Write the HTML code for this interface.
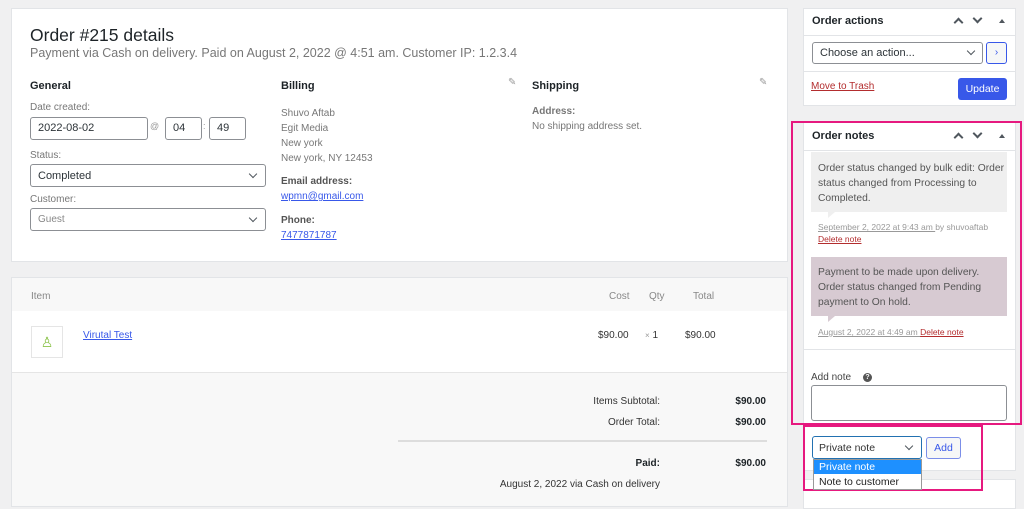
<!DOCTYPE html>
<html><head><meta charset="utf-8"><style>
*{box-sizing:border-box;margin:0;padding:0}
body{width:1024px;height:493px;overflow:hidden;background:#f0f0f1;font-family:"Liberation Sans",sans-serif;color:#50575e;position:relative;font-size:10px}
.a{position:absolute;white-space:nowrap}
.p{position:absolute;background:#fff;border:1px solid #e2e4e7}
.in{position:absolute;background:#fff;border:1px solid #8c8f94;border-radius:3px;font-size:11px;color:#2c3338;padding:4px 7px}
.b{font-weight:bold;color:#1d2327;font-size:11px}
.lk{color:#3858e9;text-decoration:underline}
.chev{position:absolute;width:6px;height:6px;border-right:1.5px solid #50575e;border-bottom:1.5px solid #50575e;transform:rotate(45deg)}
.up{position:absolute;width:7px;height:7px;border-left:2px solid #50575e;border-top:2px solid #50575e;transform:rotate(45deg)}
.dn{position:absolute;width:7px;height:7px;border-right:2px solid #50575e;border-bottom:2px solid #50575e;transform:rotate(45deg)}
.tri{position:absolute;width:0;height:0;border-left:3px solid transparent;border-right:3px solid transparent;border-bottom:4px solid #50575e}
</style></head><body>
<div class="p" style="left:11px;top:8px;width:777px;height:254px"></div>
<div class="a" style="left:30px;top:25px;font-size:17.5px;color:#1d2327">Order #215 details</div>
<div class="a" style="left:30px;top:46px;font-size:12.5px;color:#777">Payment via Cash on delivery. Paid on August 2, 2022 @ 4:51 am. Customer IP: 1.2.3.4</div>
<div class="a b" style="left:30px;top:80px">General</div>
<div class="a b" style="left:281px;top:80px">Billing</div>
<div class="a b" style="left:532px;top:80px">Shipping</div>
<div class="a" style="left:508px;top:77px;color:#999;font-size:10px">✎</div>
<div class="a" style="left:759px;top:77px;color:#999;font-size:10px">✎</div>
<div class="a" style="left:30px;top:102px;color:#777">Date created:</div>
<div class="in" style="left:30px;top:117px;width:118px;height:23px">2022-08-02</div>
<div class="a" style="left:150px;top:121px;color:#999;font-size:9px">@</div>
<div class="in" style="left:165px;top:117px;width:37px;height:23px">04</div>
<div class="a" style="left:203px;top:121px;color:#999;font-size:9px">:</div>
<div class="in" style="left:209px;top:117px;width:37px;height:23px">49</div>
<div class="a" style="left:30px;top:150px;color:#777">Status:</div>
<div class="in" style="left:30px;top:164px;width:236px;height:23px;padding-top:5px">Completed</div>
<div class="chev" style="left:250px;top:171px"></div>
<div class="a" style="left:30px;top:194px;color:#777">Customer:</div>
<div class="in" style="left:30px;top:208px;width:236px;height:23px;color:#888;padding-top:5px;font-size:10px">Guest</div>
<div class="chev" style="left:250px;top:215px"></div>
<div class="a" style="left:281px;top:106px;line-height:15px;color:#777">Shuvo Aftab<br>Egit Media<br>New york<br>New york, NY 12453</div>
<div class="a b" style="left:281px;top:176px;color:#555;font-size:10px">Email address:</div>
<div class="a lk" style="left:281px;top:191px">wpmn@gmail.com</div>
<div class="a b" style="left:281px;top:215px;color:#555;font-size:10px">Phone:</div>
<div class="a lk" style="left:281px;top:230px">7477871787</div>
<div class="a b" style="left:532px;top:106px;color:#777;font-size:10px">Address:</div>
<div class="a" style="left:532px;top:121px;color:#777">No shipping address set.</div>

<div class="p" style="left:11px;top:277px;width:777px;height:230px;background:#f8f8f8"></div>
<div class="a" style="left:31px;top:291px;color:#888">Item</div>
<div class="a" style="left:609px;top:291px;color:#888">Cost</div>
<div class="a" style="left:649px;top:291px;color:#888">Qty</div>
<div class="a" style="left:693px;top:291px;color:#888">Total</div>
<div class="a" style="left:12px;top:311px;width:775px;height:62px;background:#fff;border-bottom:1px solid #e5e5e5"></div>
<div class="a" style="left:31px;top:326px;width:32px;height:32px;border:1px solid #e5e5e5;background:#fff;color:#8bc34a;font-size:14px;text-align:center;line-height:30px">♙</div>
<div class="a lk" style="left:83px;top:330px">Virutal Test</div>
<div class="a" style="left:598px;top:330px;color:#333">$90.00</div>
<div class="a" style="left:645px;top:330px;color:#333"><span style="color:#999;font-size:8px">×</span> 1</div>
<div class="a" style="left:685px;top:330px;color:#333">$90.00</div>
<div class="a" style="right:364px;top:396px;color:#333">Items Subtotal:</div>
<div class="a b" style="right:258px;top:396px;font-size:10px">$90.00</div>
<div class="a" style="right:364px;top:417px;color:#333">Order Total:</div>
<div class="a b" style="right:258px;top:417px;font-size:10px">$90.00</div>
<div class="a" style="left:398px;top:440px;width:369px;height:2px;background:#ddd"></div>
<div class="a b" style="right:364px;top:458px;font-size:10px">Paid:</div>
<div class="a b" style="right:258px;top:458px;font-size:10px">$90.00</div>
<div class="a" style="right:364px;top:479px;color:#333">August 2, 2022 via Cash on delivery</div>

<div class="p" style="left:803px;top:8px;width:213px;height:98px"></div>
<div class="a" style="left:804px;top:35px;width:211px;height:1px;background:#e2e4e7"></div>
<div class="a b" style="left:812px;top:15px">Order actions</div>
<div class="up" style="left:955px;top:19px"></div><div class="dn" style="left:974px;top:15px"></div><div class="tri" style="left:999px;top:19px"></div>
<div class="in" style="left:812px;top:42px;width:171px;height:22px;font-size:11px;color:#2c3338;padding-top:4px">Choose an action...</div>
<div class="chev" style="left:968px;top:48px"></div>
<div class="a" style="left:986px;top:42px;width:21px;height:22px;border:1px solid #3858e9;border-radius:3px;background:#f6f7f7;color:#3858e9;text-align:center;line-height:20px;font-size:10px">›</div>
<div class="a" style="left:804px;top:71px;width:211px;height:1px;background:#e2e4e7"></div>
<div class="a" style="left:811px;top:81px;color:#b32d2e;text-decoration:underline">Move to Trash</div>
<div class="a" style="left:958px;top:78px;width:49px;height:22px;background:#3858e9;border-radius:3px;color:#fff;text-align:center;line-height:22px;font-size:10.5px">Update</div>

<div class="p" style="left:803px;top:479px;width:213px;height:30px"></div>
<div class="p" style="left:803px;top:122px;width:213px;height:349px"></div>
<div class="a" style="left:804px;top:150px;width:211px;height:1px;background:#e2e4e7"></div>
<div class="a b" style="left:812px;top:130px">Order notes</div>
<div class="up" style="left:955px;top:134px"></div><div class="dn" style="left:974px;top:130px"></div><div class="tri" style="left:999px;top:134px"></div>
<div class="a" style="left:811px;top:152px;width:196px;height:60px;background:#efefef;padding:9px 7px;line-height:15px;font-size:10.3px;color:#555">Order status changed by bulk edit: Order<br>status changed from Processing to<br>Completed.</div>
<div class="a" style="left:828px;top:212px;border-top:6px solid #efefef;border-right:7px solid transparent"></div>
<div class="a" style="left:818px;top:222px;font-size:8.5px;color:#999"><span style="text-decoration:underline">September 2, 2022 at 9:43 am </span>by shuvoaftab</div>
<div class="a" style="left:818px;top:234px;font-size:8.5px;color:#b32d2e;text-decoration:underline">Delete note</div>
<div class="a" style="left:811px;top:257px;width:196px;height:59px;background:#d7cad2;padding:8px 7px;line-height:15px;font-size:10.3px;color:#555">Payment to be made upon delivery.<br>Order status changed from Pending<br>payment to On hold.</div>
<div class="a" style="left:828px;top:316px;border-top:6px solid #d7cad2;border-right:7px solid transparent"></div>
<div class="a" style="left:818px;top:327px;font-size:8.5px;color:#999"><span style="text-decoration:underline">August 2, 2022 at 4:49 am </span><span style="color:#b32d2e;text-decoration:underline">Delete note</span></div>
<div class="a" style="left:804px;top:349px;width:211px;height:1px;background:#e2e4e7"></div>
<div class="a" style="left:811px;top:372px;font-size:10px;color:#444">Add note</div>
<div class="a" style="left:863px;top:373px;width:9px;height:9px;border-radius:50%;background:#555;color:#fff;font-size:7px;text-align:center;line-height:9px;font-weight:bold">?</div>
<div class="a" style="left:811px;top:385px;width:196px;height:36px;border:1px solid #8c8f94;border-radius:3px;background:#fff"></div>
<div class="a" style="left:791px;top:121px;width:231px;height:304px;border:2px solid #e6197f"></div>
<div class="a" style="left:803px;top:425px;width:180px;height:66px;border:2px solid #e6197f"></div>
<div class="a" style="left:812px;top:436px;width:110px;height:23px;border:1px solid #2271b1;border-radius:3px;background:#fff;font-size:10.5px;color:#333;padding:5px 6px">Private note</div>
<div class="chev" style="left:906px;top:443px"></div>
<div class="a" style="left:926px;top:437px;width:35px;height:22px;border:1px solid #7b8ee8;border-radius:3px;background:#f6f7f7;color:#3858e9;text-align:center;line-height:20px;font-size:10.5px">Add</div>
<div class="a" style="left:813px;top:459px;width:109px;height:31px;border:1px solid #999;background:#fff"></div>
<div class="a" style="left:814px;top:460px;width:107px;height:14px;background:#1e90ff;color:#fff;font-size:10.5px;padding-left:5px;line-height:14px">Private note</div>
<div class="a" style="left:819px;top:475px;font-size:10.5px;color:#222;line-height:14px">Note to customer</div>
</body></html>
